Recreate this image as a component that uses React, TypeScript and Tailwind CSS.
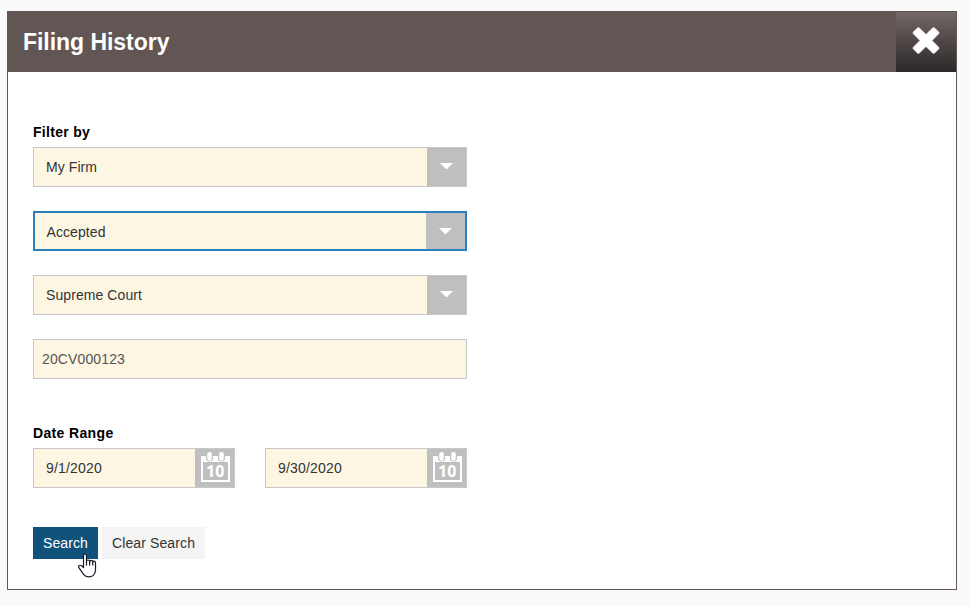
import React from 'react';
import clsx from 'clsx';

const CloseIcon = () => (
  <svg width="28" height="28" viewBox="0 0 28 28">
    <path
      d="M7.3 .9 14 7.6 20.7 .9Q21.6 .1 22.5 .9L26.6 5Q27.4 5.9 26.6 6.8L20 13.5 26.6 20.2Q27.4 21.1 26.6 22L22.5 26.1Q21.6 26.9 20.7 26.1L14 19.4 7.3 26.1Q6.4 26.9 5.5 26.1L1.4 22Q.6 21.1 1.4 20.2L8 13.5 1.4 6.8Q.6 5.9 1.4 5L5.5 .9Q6.4 .1 7.3 .9Z"
      fill="#fff"
      stroke="#fff"
      strokeWidth="0.7"
    />
  </svg>
);

const CalendarIcon = () => (
  <svg width="39" height="38" viewBox="0 1 39 38" className="block">
    <rect x="6" y="8" width="29" height="26" fill="#fff" />
    <rect x="8" y="14" width="25" height="18" fill="#bfbfbf" />
    <rect x="11" y="3.5" width="7" height="10" rx="3" fill="#bfbfbf" />
    <rect x="23" y="3.5" width="7" height="10" rx="3" fill="#bfbfbf" />
    <rect x="12.2" y="4" width="4.6" height="8.7" rx="2" fill="#fff" />
    <rect x="24.2" y="4" width="4.6" height="8.7" rx="2" fill="#fff" />
    <text
      x="20.2"
      y="29"
      textAnchor="middle"
      fill="#fff"
      fontSize="16"
      fontWeight="700"
      fontFamily="'Open Sans', sans-serif"
    >
      10
    </text>
  </svg>
);

const HandCursor = () => (
  <svg width="20" height="25" viewBox="0 0 20 25" className="block">
    <path
      d="M5.5 14.5V3Q5.5 1 7 1T8.5 3V8.5Q8.5 7 10.1 7T11.7 8.8Q11.8 7.4 13.2 7.4T14.8 9.2Q15 8.2 16.2 8.2T17.5 10V17Q17.5 20 15.3 22.4Q13.8 23.8 10.5 23.8Q7.5 23.8 5.8 21.7L1.2 15.2Q.1 13.6 1 12.7T3.6 12.7L5.5 14.5Z"
      fill="#fff"
      stroke="#17172a"
      strokeWidth="1.2"
      strokeLinejoin="round"
    />
    <path d="M8.5 8v4.5M11.6 8.5v4M14.7 9v3.5" fill="none" stroke="#17172a" strokeWidth="1.2" />
  </svg>
);

const SelectField = ({ value, focused = false }: { value: string; focused?: boolean }) => (
  <button
    type="button"
    className={clsx(
      'flex h-10 w-full items-stretch bg-[#fdf6e3] text-left tracking-[0.08px]',
      focused ? 'border-2 border-[#2a80bd]' : 'border border-[#c8c8c8]'
    )}
  >
    <span className={clsx('flex flex-1 items-center', focused ? 'pt-0.5 pl-[11.5px]' : 'pl-3')}>{value}</span>
    <span className="flex w-[39px] items-center justify-center bg-[#bfbfbf]">
      <svg width="13" height="6" viewBox="0 0 13 6" className={clsx(!focused && 'mb-0.5')}>
        <path d="M0 0h13L6.5 6.5z" fill="#fff" />
      </svg>
    </span>
  </button>
);

const DateField = ({ value }: { value: string }) => (
  <div className="flex h-10 w-[202px] border border-[#c8c8c8] bg-[#fdf6e3]">
    <span className="flex flex-1 items-center pl-3 tracking-[0.18px]">{value}</span>
    <button type="button" className="h-[38px] w-[39px] bg-[#bfbfbf]">
      <CalendarIcon />
    </button>
  </div>
);

const FilingHistory = () => {
  const filters = [
    { value: 'My Firm' },
    { value: 'Accepted', focused: true },
    { value: 'Supreme Court' },
  ];

  return (
    <div className="h-[606px] w-[970px] bg-[#fafafa] pt-[11px] pl-[7px] font-['Liberation_Sans',Arial,sans-serif] text-sm text-[#333]">
      <div className="h-[579px] w-[950px] border border-[#625655] bg-white">
        {/* Header */}
        <div className="flex h-[60px] items-center justify-between bg-[#625655]">
          <h1 className="pl-[15px] text-[23px] font-bold tracking-[-0.04px] text-white">Filing History</h1>
          <button
            type="button"
            className="flex h-[60px] w-[60px] items-center justify-center bg-linear-to-b from-[#746867] to-[#2d2829] pb-[2px]"
          >
            <CloseIcon />
          </button>
        </div>

        <div className="w-[459px] pt-[50px] pl-[25px]">
          <h2 className="mb-[5px] font-bold tracking-[0.3px] text-black">Filter by</h2>
          <div className="flex flex-col gap-6">
            {filters.map((filter) => (
              <SelectField key={filter.value} value={filter.value} focused={filter.focused} />
            ))}
            <div className="flex h-10 items-center border border-[#c8c8c8] bg-[#fdf6e3] pl-2 tracking-[0.12px] text-[#555]">
              20CV000123
            </div>
          </div>

          <h2 className="mt-11 mb-[5px] font-bold tracking-[0.35px] text-black">Date Range</h2>
          <div className="flex justify-between">
            <DateField value="9/1/2020" />
            <DateField value="9/30/2020" />
          </div>

          {/* Actions */}
          <div className="mt-[39px] flex gap-1">
            <div className="relative">
              <button type="button" className="h-8 w-[65px] bg-[#11527c] tracking-[0.08px] text-white">
                Search
              </button>
              <div className="absolute top-[26px] left-[45px]">
                <HandCursor />
              </div>
            </div>
            <button type="button" className="h-8 w-[103px] bg-[#f4f4f4] tracking-[0.12px]">
              Clear Search
            </button>
          </div>
        </div>
      </div>
    </div>
  );
};

export default FilingHistory;
